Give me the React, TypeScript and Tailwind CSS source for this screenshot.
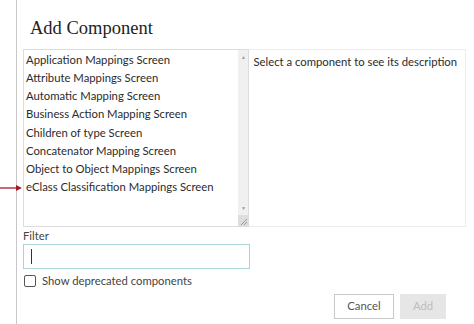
import React from "react";

const items = [
  "Application Mappings Screen",
  "Attribute Mappings Screen",
  "Automatic Mapping Screen",
  "Business Action Mapping Screen",
  "Children of type Screen",
  "Concatenator Mapping Screen",
  "Object to Object Mappings Screen",
  "eClass Classification Mappings Screen",
];

export default function App() {
  return (
    <div className="relative w-[474px] h-[324px] bg-white overflow-hidden text-[#333]" style={{ fontFamily: 'Lato, "Open Sans", sans-serif' }}>
      {/* red arrow */}
      <svg className="absolute left-0 top-[183px]" width="24" height="10" viewBox="0 0 24 10">
        <line x1="0" y1="5" x2="18" y2="5" stroke="#a3192b" strokeWidth="1.3" />
        <path d="M16 2 L22 5 L16 8 Z" fill="#a3192b" />
      </svg>

      <div className="ml-[16px] h-full border-l border-[#c8c8c8] pl-[6px] pr-[8px] flex flex-col">
        <h1 className="pl-[7px] pt-[16px] h-[49px] text-[18.5px] leading-[24px] text-[#222]" style={{ fontFamily: '"Liberation Serif", serif' }}>
          Add Component
        </h1>

        <div className="flex h-[178px]">
          <div className="flex w-[227px] border border-[#dcdcdc]">
            <ul className="flex-1 pl-[2px] pt-[1px] text-[11.3px] text-[#2b2b2b]">
              {items.map((it) => (
                <li key={it} className="h-[18.15px] leading-[18px] whitespace-nowrap">
                  {it}
                </li>
              ))}
            </ul>
            <div className="w-[10px] bg-[#f0f0f0] flex flex-col items-center justify-between">
              <span className="mt-[5px] text-[5px] leading-none text-[#999]">▲</span>
              <div className="flex flex-col items-center">
                <span className="mb-[4px] text-[5px] leading-none text-[#999]">▼</span>
                <svg width="10" height="11" viewBox="0 0 10 11" className="bg-[#dedede]">
                  <line x1="3" y1="10" x2="9" y2="4" stroke="#888" strokeWidth="0.8" />
                  <line x1="6" y1="10" x2="9" y2="7" stroke="#888" strokeWidth="0.8" />
                </svg>
              </div>
            </div>
          </div>
          <div className="w-[217px] border border-l-0 border-[#ececec] pl-[4px] pt-[3px] text-[11.3px] leading-[18px] whitespace-nowrap text-[#2b2b2b]">
            Select a component to see its description
          </div>
        </div>

        <label className="mt-[1px] text-[11.3px] leading-[16px] text-[#444]">Filter</label>
        <div className="w-[227px] h-[25px] border border-[#a9d3d6] flex items-center pl-[7px]">
          <div className="w-px h-[15px] bg-[#333]" />
        </div>

        <div className="flex items-center mt-[5px] gap-[6px] pl-[1px]">
          <div className="w-[12px] h-[12px] border border-[#555] rounded-[2px]" />
          <span className="text-[11.3px] leading-[14px] text-[#444]">Show deprecated components</span>
        </div>

        <div className="flex justify-end gap-[6px] mt-[6px] pr-[20px]">
          <button className="w-[60px] h-[25px] border border-[#c8c8c8] bg-white text-[11.3px] text-[#555]">Cancel</button>
          <button className="w-[46px] h-[25px] bg-[#e6e6e6] text-[11.3px] text-[#bdbdbd]">Add</button>
        </div>
      </div>
    </div>
  );
}
